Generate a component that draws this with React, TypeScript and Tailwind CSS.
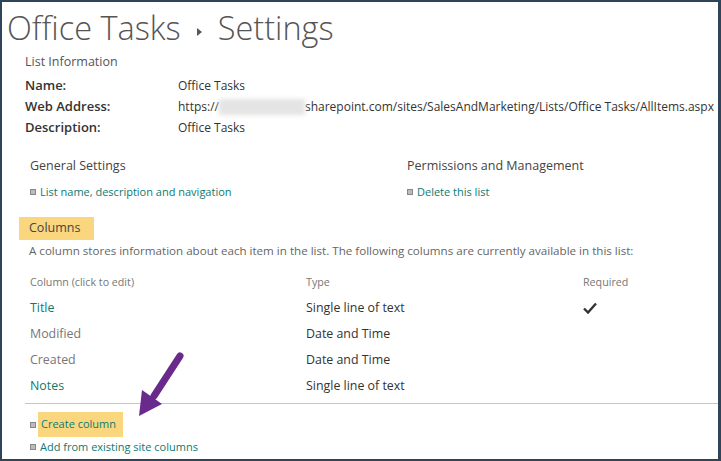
import React from "react";

const font = { fontFamily: '"Open Sans", "Noto Sans", sans-serif' };

const Bullet = () => <span className="inline-block shrink-0 w-[6px] h-[6px] bg-[#bbb] border border-[#888] mr-[4px]" />;

const columns = [
    { name: "Title", type: "Single line of text", link: true, required: true },
    { name: "Modified", type: "Date and Time", link: false, required: false },
    { name: "Created", type: "Date and Time", link: false, required: false },
    { name: "Notes", type: "Single line of text", link: true, required: false },
];

const App = () => {
    return (
        <div className="w-[721px] h-[461px] bg-[#2f4458] pt-[2px] pl-[2px] pr-[3px] pb-[2px]" style={font}>
            <div className="relative w-full h-full bg-white overflow-hidden text-[#444]">
                {/* page title */}
                <div className="flex items-center pl-[5px] pt-[3px] h-[50px] text-[32.5px] font-light text-[#555] leading-none whitespace-nowrap">
                    <span>Office Tasks</span>
                    <svg className="mx-[16px] mt-[6px]" width="5" height="8" viewBox="0 0 5 8">
                        <path d="M0 0 L5 4 L0 8 Z" fill="#555" />
                    </svg>
                    <span>Settings</span>
                </div>

                {/* list info */}
                <div className="pl-[23px]">
                    <div className="text-[12.5px] text-[#555] h-[20px] flex items-center">List Information</div>
                    <div className="mt-[3px] text-[12px]">
                        <div className="flex h-[21px] items-center">
                            <span className="w-[153px] font-semibold text-[13px] text-[#333]">Name:</span>
                            <span className="text-[#333]">Office Tasks</span>
                        </div>
                        <div className="flex h-[21px] items-center whitespace-nowrap">
                            <span className="w-[153px] shrink-0 font-semibold text-[13px] text-[#333]">Web Address:</span>
                            <span className="text-[#333] flex items-center">
                                https://
                                <span className="inline-block w-[86px] h-[16px] bg-[#e4e4e4] blur-[2px]" />
                                sharepoint.com/sites/SalesAndMarketing/Lists/Office Tasks/AllItems.aspx
                            </span>
                        </div>
                        <div className="flex h-[21px] items-center">
                            <span className="w-[153px] font-semibold text-[13px] text-[#333]">Description:</span>
                            <span className="text-[#333]">Office Tasks</span>
                        </div>
                    </div>
                </div>

                {/* settings groups */}
                <div className="flex mt-[18px] pl-[28px] text-[12.5px] whitespace-nowrap">
                    <div className="w-[377px]">
                        <div className="text-[#444] h-[20px] flex items-center">General Settings</div>
                        <div className="mt-[6px] h-[20px] text-[11px] text-[#0b7a70] flex items-center">
                            <Bullet />
                            List name, description and navigation
                        </div>
                    </div>
                    <div>
                        <div className="text-[#444] h-[20px] flex items-center">Permissions and Management</div>
                        <div className="mt-[6px] h-[20px] text-[11px] text-[#0b7a70] flex items-center">
                            <Bullet />
                            Delete this list
                        </div>
                    </div>
                </div>

                {/* columns */}
                <div className="mt-[15px] ml-[17px] w-[75px] h-[23px] bg-[#fad67e] pl-[10px] flex items-center text-[12.5px] text-[#444]">
                    Columns
                </div>
                <div className="pl-[27px] mt-[3px] h-[16px] flex items-center text-[11.6px] text-[#666] whitespace-nowrap">
                    A column stores information about each item in the list. The following columns are currently available in this list:
                </div>

                <div className="pl-[28px] mt-[13px]">
                    <div className="grid grid-cols-[276px_277px_1fr] text-[10.7px] text-[#777] h-[20px] items-center">
                        <span>Column (click to edit)</span>
                        <span>Type</span>
                        <span>Required</span>
                    </div>
                    <div className="mt-[3px]">
                        {columns.map((c) => (
                            <div key={c.name} className="grid grid-cols-[276px_277px_1fr] h-[26px] items-center text-[12.4px]">
                                <span className={c.link ? "text-[#0b7a70]" : "text-[#777]"}>{c.name}</span>
                                <span className="text-[#333]">{c.type}</span>
                                <span className="flex items-center">
                                    {c.required && (
                                        <svg width="14" height="12" viewBox="0 0 14 12">
                                            <path d="M1 6.5 L5 10.5 L13 1.5" fill="none" stroke="#333" strokeWidth="2.4" />
                                        </svg>
                                    )}
                                </span>
                            </div>
                        ))}
                    </div>
                </div>

                <div className="mt-[4px] ml-[23px] border-t border-[#c6c6c6]" />

                <div className="pl-[28px] mt-[8px] text-[11px] text-[#0b7a70] whitespace-nowrap">
                    <div className="flex items-center h-[25px]">
                        <Bullet />
                        <span className="bg-[#fad67e] h-[25px] pl-[3px] w-[85px] -ml-[2px] flex items-center">Create column</span>
                    </div>
                    <div className="flex items-center h-[20px]">
                        <Bullet />
                        Add from existing site columns
                    </div>
                </div>

                {/* callout arrow */}
                <svg className="absolute left-[128px] top-[346px]" width="60" height="75" viewBox="0 0 60 75">
                    <line x1="50" y1="8" x2="24" y2="48" stroke="#6a2a8c" strokeWidth="7" strokeLinecap="round" />
                    <path d="M9 68 L12 42 L32 56 Z" fill="#6a2a8c" />
                </svg>
            </div>
        </div>
    );
};

export default App;
